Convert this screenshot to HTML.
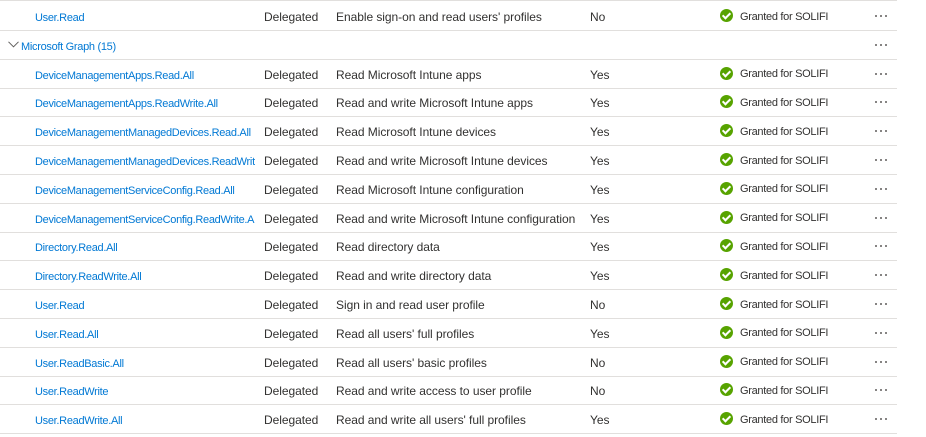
<!DOCTYPE html>
<html><head><meta charset="utf-8"><style>
body{margin:0;width:926px;height:437px;background:#fff;overflow:hidden;font-family:"Liberation Sans",sans-serif;font-size:12px;letter-spacing:-0.05px;color:#323130;position:relative}
.r{position:absolute;left:0;width:897px;height:28px;border-bottom:1px solid #e1dfdd}
.r span{position:absolute;top:7px;white-space:nowrap;line-height:16px}
.r span.n{top:8px}
.n{left:35px;color:#0078d4;max-width:220px;overflow:hidden;font-size:11px;letter-spacing:-0.3px}
.d{left:264px}.p{left:336px}.y{left:590px}
.r span.g{left:740px;top:6.5px;font-size:11px;letter-spacing:-0.3px}
.c{position:absolute;left:720px;top:7px;width:13px;height:13px;border-radius:50%;background:#57a300}
.c:after{content:"";position:absolute;left:4px;top:2px;width:3px;height:6px;border:solid #fff;border-width:0 2px 2px 0;transform:rotate(45deg)}
.m{position:absolute;left:875px;top:13px;width:14px;height:2px}
.m:before{content:"";position:absolute;left:0;top:0;width:2px;height:2px;border-radius:1px;background:#605e5c;box-shadow:5px 0 0 #605e5c,10px 0 0 #605e5c}
.top{position:absolute;left:0;top:0;width:897px;border-top:1px solid #e1dfdd}
</style></head><body>
<div class="top"></div>
<div class="r" style="top:2px"><span class="n">User.Read</span><span class="d">Delegated</span><span class="p">Enable sign-on and read users' profiles</span><span class="y">No</span><i class="c"></i><span class="g">Granted for SOLIFI</span><i class="m"></i></div>
<div class="r" style="top:30.8px"><svg style="position:absolute;left:8px;top:10px" width="11" height="7" viewBox="0 0 11 7"><path d="M0.5 0.8 L5.5 5.8 L10.5 0.8" fill="none" stroke="#605e5c" stroke-width="1"/></svg><span style="left:21px;top:8px;color:#0078d4;font-size:11px;letter-spacing:-0.3px">Microsoft Graph (15)</span><i class="m"></i></div>
<div class="r" style="top:59.6px"><span class="n">DeviceManagementApps.Read.All</span><span class="d">Delegated</span><span class="p">Read Microsoft Intune apps</span><span class="y">Yes</span><i class="c"></i><span class="g">Granted for SOLIFI</span><i class="m"></i></div>
<div class="r" style="top:88.4px"><span class="n">DeviceManagementApps.ReadWrite.All</span><span class="d">Delegated</span><span class="p">Read and write Microsoft Intune apps</span><span class="y">Yes</span><i class="c"></i><span class="g">Granted for SOLIFI</span><i class="m"></i></div>
<div class="r" style="top:117.2px"><span class="n">DeviceManagementManagedDevices.Read.All</span><span class="d">Delegated</span><span class="p">Read Microsoft Intune devices</span><span class="y">Yes</span><i class="c"></i><span class="g">Granted for SOLIFI</span><i class="m"></i></div>
<div class="r" style="top:146px"><span class="n">DeviceManagementManagedDevices.ReadWrite.All</span><span class="d">Delegated</span><span class="p">Read and write Microsoft Intune devices</span><span class="y">Yes</span><i class="c"></i><span class="g">Granted for SOLIFI</span><i class="m"></i></div>
<div class="r" style="top:174.8px"><span class="n">DeviceManagementServiceConfig.Read.All</span><span class="d">Delegated</span><span class="p">Read Microsoft Intune configuration</span><span class="y">Yes</span><i class="c"></i><span class="g">Granted for SOLIFI</span><i class="m"></i></div>
<div class="r" style="top:203.6px"><span class="n">DeviceManagementServiceConfig.ReadWrite.All</span><span class="d">Delegated</span><span class="p">Read and write Microsoft Intune configuration</span><span class="y">Yes</span><i class="c"></i><span class="g">Granted for SOLIFI</span><i class="m"></i></div>
<div class="r" style="top:232.4px"><span class="n">Directory.Read.All</span><span class="d">Delegated</span><span class="p">Read directory data</span><span class="y">Yes</span><i class="c"></i><span class="g">Granted for SOLIFI</span><i class="m"></i></div>
<div class="r" style="top:261.2px"><span class="n">Directory.ReadWrite.All</span><span class="d">Delegated</span><span class="p">Read and write directory data</span><span class="y">Yes</span><i class="c"></i><span class="g">Granted for SOLIFI</span><i class="m"></i></div>
<div class="r" style="top:290px"><span class="n">User.Read</span><span class="d">Delegated</span><span class="p">Sign in and read user profile</span><span class="y">No</span><i class="c"></i><span class="g">Granted for SOLIFI</span><i class="m"></i></div>
<div class="r" style="top:318.8px"><span class="n">User.Read.All</span><span class="d">Delegated</span><span class="p">Read all users' full profiles</span><span class="y">Yes</span><i class="c"></i><span class="g">Granted for SOLIFI</span><i class="m"></i></div>
<div class="r" style="top:347.6px"><span class="n">User.ReadBasic.All</span><span class="d">Delegated</span><span class="p">Read all users' basic profiles</span><span class="y">No</span><i class="c"></i><span class="g">Granted for SOLIFI</span><i class="m"></i></div>
<div class="r" style="top:376.4px"><span class="n">User.ReadWrite</span><span class="d">Delegated</span><span class="p">Read and write access to user profile</span><span class="y">No</span><i class="c"></i><span class="g">Granted for SOLIFI</span><i class="m"></i></div>
<div class="r" style="top:405.2px"><span class="n">User.ReadWrite.All</span><span class="d">Delegated</span><span class="p">Read and write all users' full profiles</span><span class="y">Yes</span><i class="c"></i><span class="g">Granted for SOLIFI</span><i class="m"></i></div>
</body></html>
